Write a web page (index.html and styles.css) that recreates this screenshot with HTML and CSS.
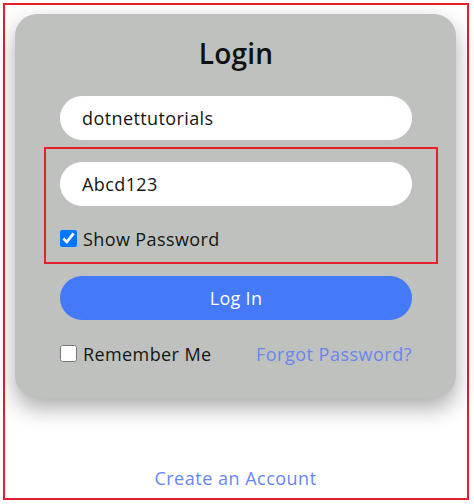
FILE: index.html
```html
<!DOCTYPE html>
<html lang="en">
<head>
<meta charset="utf-8">
<title>Login</title>
<link rel="stylesheet" href="styles.css">
</head>
<body>
<div class="frame">
  <div class="card">
    <h1 class="title">Login</h1>
    <input class="field" type="text" value="dotnettutorials">
    <div class="pw-group">
      <input class="field pw" type="text" value="Abcd123">
      <label class="check-row show-row"><input type="checkbox" checked><span>Show Password</span></label>
    </div>
    <button class="btn">Log In</button>
    <div class="bottom-row">
      <label class="check-row"><input type="checkbox"><span>Remember Me</span></label>
      <a class="link" href="#">Forgot Password?</a>
    </div>
  </div>
  <div class="create"><a class="link" href="#">Create an Account</a></div>
</div>
</body>
</html>
```

FILE: styles.css
```css
* { box-sizing: border-box; }
body {
  margin: 0;
  background: #fff;
  font-family: "Open Sans", "Noto Sans", sans-serif;
  color: #151515;
}
.frame {
  margin: 3px 0 0 3px;
  width: 466px;
  height: 497px;
  border: 2px solid #e3202c;
  padding: 9px 0 0 10px;
}
.card {
  width: 441px;
  background: #bec1be;
  border-radius: 22px;
  padding: 22px 44px 36px 45px;
  box-shadow: 0 10px 22px rgba(0, 0, 0, 0.33);
  display: flex;
  flex-direction: column;
}
.title {
  margin: 0;
  font-size: 28px;
  line-height: 34px;
  font-weight: 600;
  text-align: center;
  color: #111;
  letter-spacing: 0.2px;
}
.field {
  display: block;
  width: 352px;
  height: 44px;
  margin: 26px 0 0 0;
  border: none;
  border-radius: 22px;
  background: #fff;
  padding: 0 22px;
  font-family: inherit;
  font-size: 18px;
  letter-spacing: 0.4px;
  color: #151515;
  outline: none;
}
.pw-group {
  position: relative;
  margin-top: 22px;
}
.pw-group::after {
  content: "";
  position: absolute;
  top: -15px;
  left: -16px;
  right: -26px;
  bottom: -17px;
  border: 2px solid #e3202c;
  pointer-events: none;
}
.pw { margin: 0; }
.check-row {
  display: flex;
  align-items: center;
  gap: 6px;
  height: 17px;
  font-size: 18px;
  letter-spacing: 0.4px;
  color: #151515;
}
.check-row input {
  width: 17px;
  height: 17px;
  margin: 0;
}
.show-row { margin-top: 24px; }
.btn {
  margin-top: 29px;
  height: 44px;
  width: 352px;
  border: none;
  border-radius: 22px;
  background: #4479f8;
  color: #fff;
  font-family: inherit;
  font-size: 18px;
  letter-spacing: 0.3px;
}
.bottom-row {
  margin-top: 25px;
  display: flex;
  justify-content: space-between;
  align-items: center;
  height: 17px;
}
.link {
  color: #6a86ef;
  text-decoration: none;
  font-size: 18px;
  letter-spacing: 0.5px;
}
.create {
  margin-top: 68px;
  width: 441px;
  text-align: center;
  line-height: 24px;
}
```
